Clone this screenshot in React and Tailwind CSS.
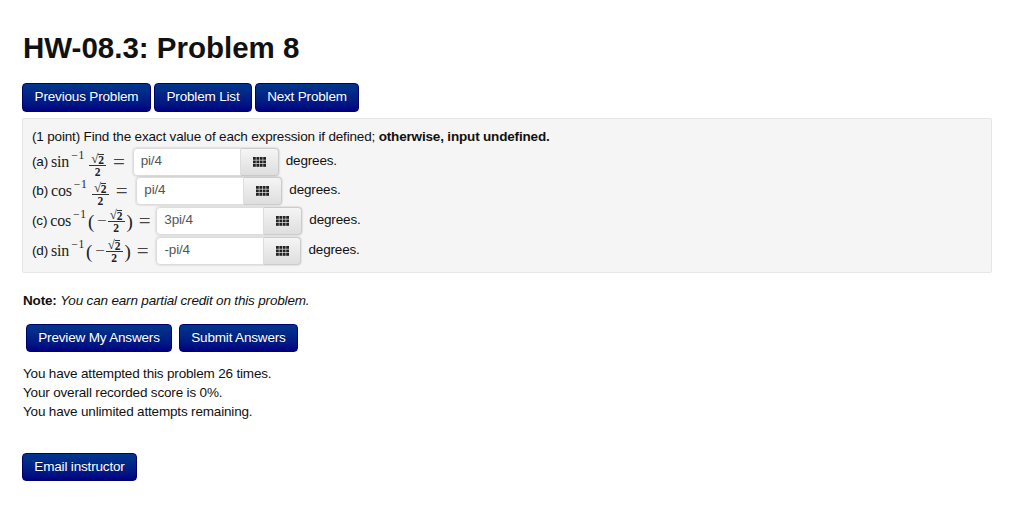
import React from 'react';

const NavButton = ({ label, className = 'pb-[2px]' }) => (
    <button className={`rounded-[4px] border border-[#00006a] bg-gradient-to-b from-[#00368c] to-[#000080] text-white text-[13.5px] tracking-[-0.17px] leading-none [text-shadow:0_-1px_0_rgba(0,0,0,0.25)] ${className}`}>
        {label}
    </button>
);

const Fraction = () => (
    <span className="inline-flex flex-col items-center font-bold text-[11.5px] leading-[12px] text-[#222] [font-family:'Liberation_Serif',serif]">
        <span className="border-b border-[#333] w-[17px] justify-center whitespace-nowrap h-[14px] flex items-end">
            <span className="font-normal text-[13px] leading-[13px]">√</span>
            <span className="border-t border-[#333] leading-[10px]">2</span>
        </span>
        <span className="h-[12px] leading-[13px]">2</span>
    </span>
);

const Math = ({ fn, negative, eqGap }) => (
    <span className="inline-flex items-center ml-[3px] [font-family:'Liberation_Serif',serif] text-[16px] text-[#222]">
        <span>{fn}</span>
        <span className="text-[11.5px] relative -top-[6px] ml-[2px] tracking-[0.8px]">−1</span>
        {negative ? (
            <>
                <span className="ml-[1px] text-[19px] leading-none font-light">(</span>
                <span className="text-[#444] text-[17px] ml-[3px] mr-[1px]">−</span>
                <Fraction />
                <span className="ml-[2px] text-[19px] leading-none font-light">)</span>
            </>
        ) : (
            <span className="ml-[4px]"><Fraction /></span>
        )}
        <span className={`text-[#444] text-[21px] leading-none ${eqGap}`}>=</span>
    </span>
);

const AnswerRow = ({ tag, fn, negative, value, addonWidth, eqGap, inputGap, rowClass = '' }) => (
    <div className={`flex items-center h-[28px] ${rowClass}`}>
        <span>{tag}</span>
        <Math fn={fn} negative={negative} eqGap={eqGap} />
        <div className={`flex h-[28px] rounded-[4px] shadow-[0_0_2px_rgba(0,0,0,0.25)] ${inputGap}`}>
            <div className="w-[108px] bg-white border border-[#ddd] rounded-l-[4px] pl-[7px] pb-[2px] flex items-center text-[#555]">
                {value}
            </div>
            <div className={`${addonWidth} flex items-center justify-center rounded-r-[4px] border border-[#ccc] border-l-0 bg-gradient-to-b from-[#f5f5f5] to-[#dedede]`}>
                <svg width="13" height="10" viewBox="0 0 13 10" fill="#222">
                    {[0, 3.5, 7].map((y) =>
                        [0, 3.4, 6.8, 10.2].map((x) => (
                            <rect key={`${x}-${y}`} x={x} y={y} width="2.8" height="2.8" />
                        ))
                    )}
                </svg>
            </div>
        </div>
        <span className="ml-[7px] pb-[2px]">degrees.</span>
    </div>
);

export default function App() {
    return (
        <div className="w-[1024px] h-[510px] bg-white overflow-hidden pl-[22px] pr-[32px] text-[13.5px] tracking-[-0.17px] text-[#111] [font-family:'Liberation_Sans',Arial,sans-serif]">
            <h1 className="pt-[29px] pl-[1px] text-[29.5px] tracking-normal leading-[38px] font-bold text-[#111]">HW-08.3: Problem 8</h1>

            <div className="flex gap-[3px] mt-[16px] h-[29px]">
                <NavButton label="Previous Problem" className="w-[129px] pb-[2px]" />
                <NavButton label="Problem List" className="w-[98px] pb-[2px]" />
                <NavButton label="Next Problem" className="w-[104px] pb-[2px]" />
            </div>

            <div className="mt-[6px] h-[155px] bg-[#f5f5f5] border border-[#e6e6e6] rounded-[2px] pl-[9px] pt-[8px]">
                <p className="leading-[19px] h-[21px]">
                    (1 point) Find the exact value of each expression if defined; <b>otherwise, input undefined.</b>
                </p>
                <AnswerRow tag="(a)" fn="sin" value="pi/4" addonWidth="w-[38px]" eqGap="ml-[7px]" inputGap="ml-[8px]" rowClass="mb-[1px]" />
                <AnswerRow tag="(b)" fn="cos" value="pi/4" addonWidth="w-[38px]" eqGap="ml-[7px]" inputGap="ml-[9px]" rowClass="mb-[2px]" />
                <AnswerRow tag="(c)" fn="cos" negative value="3pi/4" addonWidth="w-[38px]" eqGap="ml-[6px]" inputGap="ml-[6px]" rowClass="mb-[2px]" />
                <AnswerRow tag="(d)" fn="sin" negative value="-pi/4" addonWidth="w-[37px]" eqGap="ml-[6px]" inputGap="ml-[8px]" />
            </div>

            <p className="mt-[19px] pl-[1px] leading-[18px]">
                <b>Note:</b> <i>You can earn partial credit on this problem.</i>
            </p>

            <div className="flex gap-[7px] ml-[4px] mt-[14px] h-[28px]">
                <NavButton label="Preview My Answers" className="w-[146px]" />
                <NavButton label="Submit Answers" className="w-[119px]" />
            </div>

            <div className="mt-[12px] pl-[1px] leading-[19px]">
                <p>You have attempted this problem 26 times.</p>
                <p>Your overall recorded score is 0%.</p>
                <p>You have unlimited attempts remaining.</p>
            </div>

            <NavButton label="Email instructor" className="w-[115px] h-[28px] mt-[32px]" />
        </div>
    );
}
